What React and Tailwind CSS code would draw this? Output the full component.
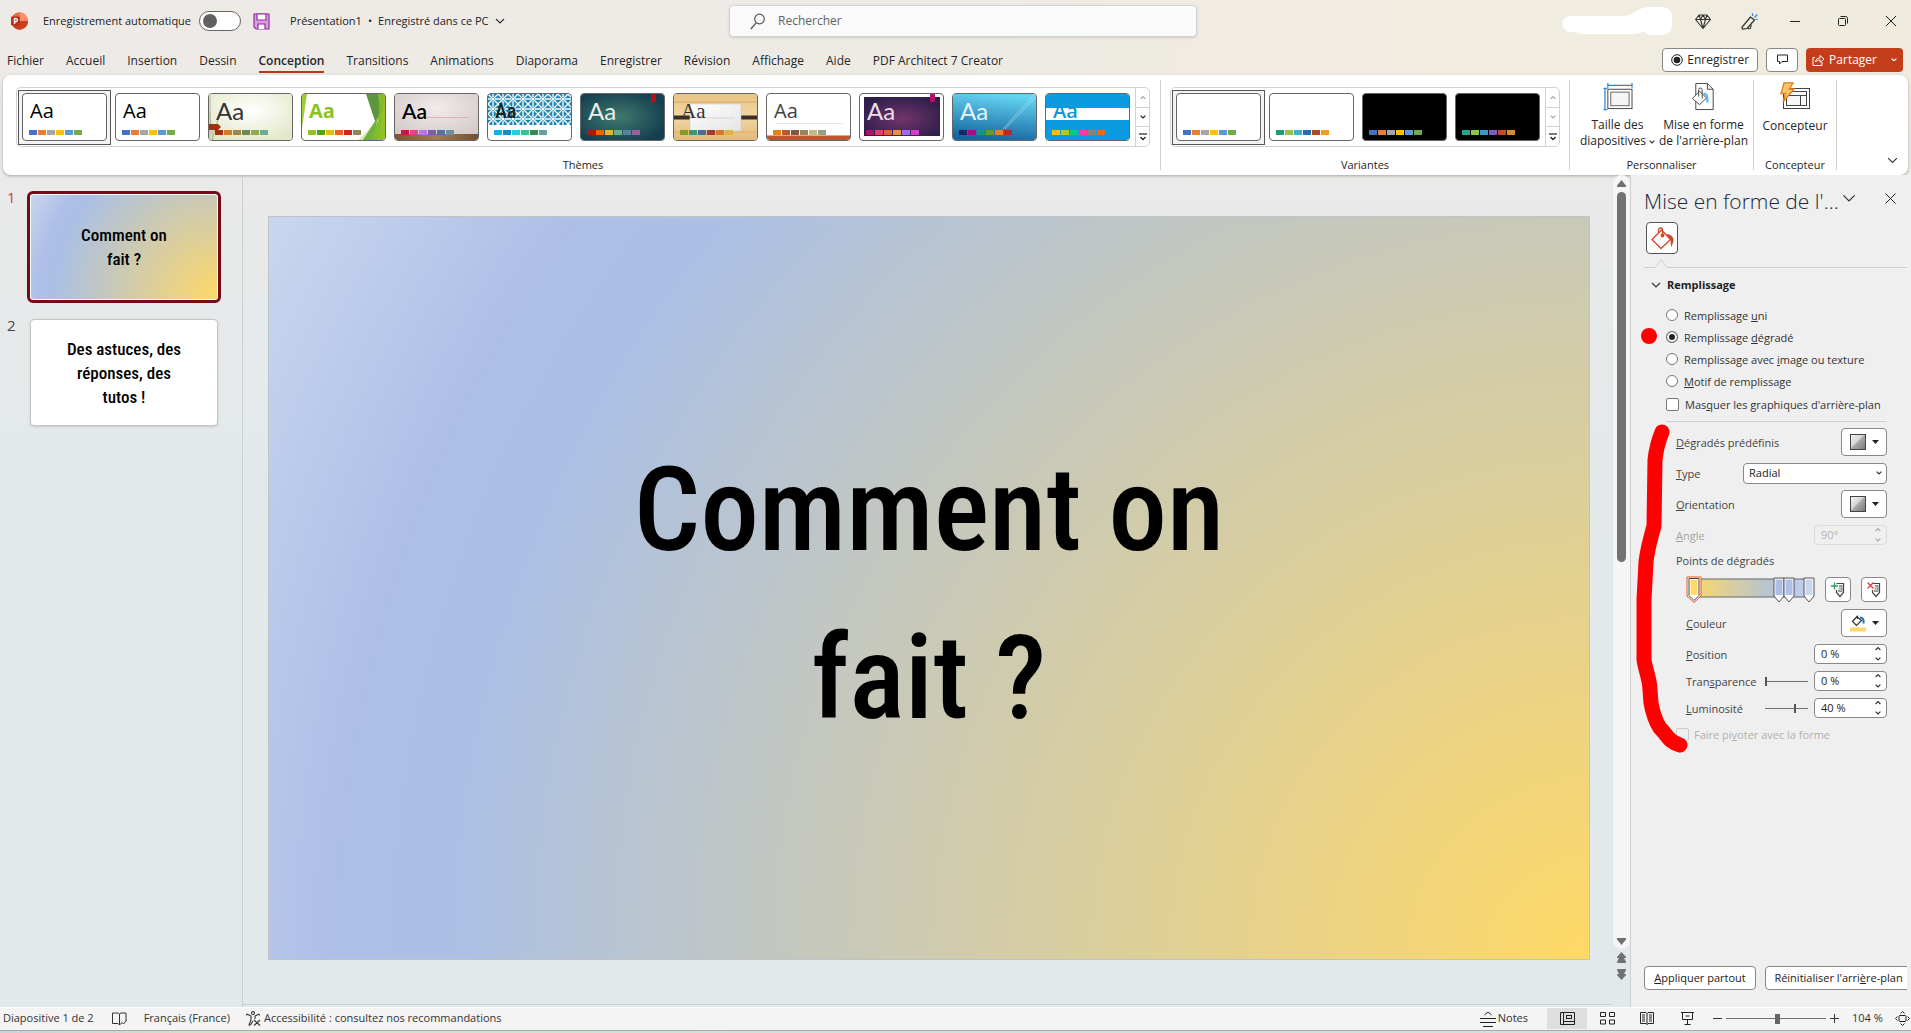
import React from 'react';

const OFFICE = ['#4472c4', '#ed7d31', '#a5a5a5', '#ffc000', '#5b9bd5', '#70ad47'];

const TABS = [
    'Fichier', 'Accueil', 'Insertion', 'Dessin', 'Conception', 'Transitions', 'Animations',
    'Diaporama', 'Enregistrer', 'Révision', 'Affichage', 'Aide', 'PDF Architect 7 Creator',
];

// Theme artworks, drawn on an 83x46 canvas
const Art = ({ children }) => (
    <svg className="absolute inset-0 h-full w-full" viewBox="0 0 83 46" preserveAspectRatio="none" aria-hidden="true">
        {children}
    </svg>
);

const THEMES = [
    { name: 'Thème Office actuel', colors: OFFICE, text: 'text-[20px] text-black', selected: true },
    { name: 'Thème Office', colors: OFFICE, text: 'text-[20px] text-black' },
    {
        name: 'Brin',
        colors: ['#a5300f', '#d97a1a', '#9f8351', '#728653', '#92aa4c', '#6aac91'],
        text: "text-[#333] text-[24px] font-['Lato',sans-serif]",
        art: (
            <Art>
                <defs><radialGradient id="brin" cx="50%" cy="35%" r="70%"><stop offset="0" stopColor="#fff" /><stop offset="1" stopColor="#e2e9c9" /></radialGradient></defs>
                <rect width="83" height="46" fill="url(#brin)" />
                <path d="M1 1v45M4 46C3 34 1 28 1 18M3 46C5 38 8 30 9 25" stroke="#b9b68d" strokeWidth="1" fill="none" />
                <path d="M0 30h9l3 3-3 3H0z" fill="#a5300f" />
            </Art>
        ),
    },
    {
        name: 'Facette',
        colors: ['#90c226', '#54a021', '#e6b91e', '#e76618', '#c42f1a', '#918655'],
        text: 'text-[20px] text-[#8cc321] font-bold',
        art: (
            <Art>
                <path d="M0 0h5L0 34z" fill="#9fcc3f" />
                <path d="M74 0h9v46H68l8-20z" fill="#90c226" />
                <path d="M64 0h12l3 14-5 16z" fill="#5f9440" />
                <path d="M74 28 56 46h12z" fill="#d8ebb0" />
                <path d="M75 24 61 46h11z" fill="#6fb03c" />
                <path d="M76 0h7L77 46h-9l9-22z" fill="#7fba2a" opacity=".7" />
            </Art>
        ),
    },
    {
        name: 'Galerie',
        colors: ['#b71e42', '#de478e', '#bc72f0', '#795faf', '#586ea6', '#6892a0'],
        text: "text-black text-[21px] font-semibold font-['Lato',sans-serif]",
        art: (
            <Art>
                <defs>
                    <radialGradient id="gal" cx="50%" cy="30%" r="75%"><stop offset="0" stopColor="#f1ebea" /><stop offset="1" stopColor="#d2c8c6" /></radialGradient>
                    <linearGradient id="wood"><stop offset="0" stopColor="#7a5634" /><stop offset=".5" stopColor="#a37c52" /><stop offset="1" stopColor="#72502f" /></linearGradient>
                </defs>
                <rect width="83" height="46" fill="url(#gal)" />
                <path d="M16 23.500h58" stroke="#e0b0bd" />
                <rect y="40" width="83" height="6" fill="url(#wood)" />
            </Art>
        ),
    },
    {
        name: 'Intégrale',
        colors: ['#1cade4', '#2683c6', '#27ced7', '#42ba97', '#3e8853', '#62a39f'],
        text: "text-[#12242c] text-[20px] font-medium font-['Roboto_Condensed','Liberation_Sans',sans-serif]",
        art: (
            <Art>
                <defs>
                    <pattern id="tri" width="10" height="10" patternUnits="userSpaceOnUse">
                        <rect width="10" height="10" fill="#1e86b4" />
                        <path d="M0 0l10 10M10 0L0 10M5 0v3M5 7v3M0 5h3M7 5h3" stroke="#fff" strokeWidth="1.300" />
                    </pattern>
                </defs>
                <rect width="83" height="31" fill="url(#tri)" />
            </Art>
        ),
    },
    {
        name: 'Ion',
        colors: ['#b01513', '#ea6312', '#e6b729', '#6aac90', '#54849a', '#9e5e9b'],
        text: "text-[#e8eeec] text-[24px] font-['Lato',sans-serif]",
        art: (
            <Art>
                <defs><radialGradient id="ion" cx="45%" cy="50%" r="60%"><stop offset="0" stopColor="#3f7b6d" /><stop offset="1" stopColor="#153f50" /></radialGradient></defs>
                <rect width="83" height="46" fill="url(#ion)" />
                <rect x="70" width="5" height="8" fill="#b01513" />
            </Art>
        ),
    },
    {
        name: 'Organique',
        colors: ['#83992a', '#3c9770', '#44709d', '#a23c33', '#d97828', '#deb340'],
        text: "text-[#333] text-[21px] font-['Liberation_Serif',serif]",
        art: (
            <Art>
                <defs>
                    <linearGradient id="org" x2="0" y2="1"><stop offset="0" stopColor="#e9c483" /><stop offset=".5" stopColor="#f1d7a4" /><stop offset="1" stopColor="#e3ba78" /></linearGradient>
                    <linearGradient id="pap" x2="1" y2="1"><stop offset="0" stopColor="#fff" /><stop offset="1" stopColor="#e4e4e4" /></linearGradient>
                </defs>
                <rect width="83" height="46" fill="url(#org)" />
                <path d="M0 8h83M0 38h83" stroke="#e4b878" strokeWidth="2" />
                <path d="M0 23.500h83" stroke="#3a2e26" strokeWidth="4" />
                <rect x="16" y="10" width="51" height="27" fill="url(#pap)" stroke="#cfc9bd" strokeWidth=".6" />
                <path d="M22 24h38" stroke="#d8d8c8" />
            </Art>
        ),
    },
    {
        name: 'Rétrospective',
        colors: ['#e48312', '#bd582c', '#865640', '#9b8357', '#c2bc80', '#94a088'],
        text: 'text-[20px] text-[#404040]',
        art: (
            <Art>
                <path d="M8 29.500h68" stroke="#e8e8e8" />
                <rect y="41" width="83" height="1" fill="#e9a77e" />
                <rect y="42" width="83" height="4" fill="#bd582c" />
            </Art>
        ),
    },
    {
        name: 'Salle d’ions',
        colors: ['#b31166', '#e33d6f', '#e45f3c', '#e9943a', '#9b6bf2', '#d53dd0'],
        text: "text-[#eadfea] text-[24px] font-['Lato',sans-serif]",
        art: (
            <Art>
                <defs><radialGradient id="sal" cx="50%" cy="55%" r="60%"><stop offset="0" stopColor="#73346b" /><stop offset="1" stopColor="#2e1f4a" /></radialGradient></defs>
                <rect x="4" y="3" width="76" height="39" fill="url(#sal)" />
                <rect x="70" width="5" height="8" fill="#b31166" />
            </Art>
        ),
    },
    {
        name: 'Tranche',
        colors: ['#052f61', '#a50e82', '#14967c', '#6a9e1f', '#e87d37', '#c62324'],
        text: "text-[#e6f6fb] text-[24px] font-['Lato',sans-serif]",
        art: (
            <Art>
                <defs><linearGradient id="tra" x1=".6" x2=".4" y2="1"><stop offset="0" stopColor="#65d6f3" /><stop offset="1" stopColor="#15659f" /></linearGradient></defs>
                <rect width="83" height="46" fill="url(#tra)" />
                <path d="M82 0 50 35M83 3 52 35" stroke="#c4ecf8" strokeWidth=".7" opacity=".8" />
            </Art>
        ),
    },
    {
        name: 'À bandes',
        colors: ['#ffc000', '#a5d028', '#08cc78', '#f24099', '#828288', '#f56617'],
        text: 'text-[20px] font-semibold text-[#0f97d6]',
        art: (
            <Art>
                <rect width="83" height="14" fill="#0c9ae0" />
                <rect y="26" width="83" height="20" fill="#0c9ae0" />
            </Art>
        ),
    },
];

const VARIANTS = [
    { name: 'Variante 1', colors: OFFICE, selected: true },
    { name: 'Variante 2', colors: ['#1b9e77', '#93c347', '#39afd1', '#1f6fb2', '#b5481c', '#f39b1c'] },
    { name: 'Variante 3', colors: OFFICE, dark: true },
    { name: 'Variante 4', colors: ['#27a588', '#93c347', '#3d97c9', '#7d5cc2', '#c8472c', '#d98c2b'], dark: true },
];

const Chevron = ({ className = '', up = false, size = 8, color = '#333' }) => (
    <svg className={className} width={size} height={size * 0.6} viewBox="0 0 10 6" fill="none" stroke={color} strokeWidth={size < 8 ? 2 : 12 / size} aria-hidden="true">
        <path d={up ? 'M1 5l4-4 4 4' : 'M1 1l4 4 4-4'} />
    </svg>
);

const ThemeThumb = ({ theme }) => (
    <button
        type="button"
        aria-label={theme.name}
        className={`flex h-[55px] w-[93px] items-center justify-center ${theme.selected ? 'border border-[#555] bg-[#f3f3f3]' : ''}`}
    >
        <span className={`relative block h-12 w-[85px] overflow-hidden rounded-[4px] border border-[#666] ${theme.dark ? 'bg-black' : 'bg-white'}`}>
            {theme.art}
            {theme.text && <span className={`absolute left-[7px] top-[5px] leading-[24px] ${theme.text}`}>Aa</span>}
            <span className="absolute bottom-[5px] left-[6px] flex gap-px">
                {theme.colors.map((c, i) => <span key={i} className="h-[5px] w-[8px]" style={{ backgroundColor: c }}></span>)}
            </span>
        </span>
    </button>
);

const Gallery = ({ items, downActive, label }) => (
    <div className="flex h-[60px] rounded-[5px] border border-[#d2d2d2]" role="group" aria-label={label}>
        <div className="flex items-center px-px">
            {items.map((t) => <ThemeThumb key={t.name} theme={t} />)}
        </div>
        <div className="flex w-[14px] flex-col divide-y divide-[#d2d2d2] border-l border-[#d2d2d2]">
            <button type="button" aria-label="Ligne précédente" className="flex flex-1 items-center justify-center"><Chevron up size={6} color="#aaa" /></button>
            <button type="button" aria-label="Ligne suivante" className="flex flex-1 items-center justify-center"><Chevron size={6} color={downActive ? '#222' : '#aaa'} /></button>
            <button type="button" aria-label="Autres" className="flex flex-1 items-center justify-center">
                <svg width="8" height="8" viewBox="0 0 8 8" stroke="#222" fill="none"><path d="M0 1h8" strokeWidth="1.200" /><path d="M1.500 4 4 6.500 6.500 4" strokeWidth="1.300" /></svg>
            </button>
        </div>
    </div>
);

const TitleBar = () => (
    <header className="flex h-[42px] items-center text-[12px] text-[#222]">
        <div className="flex w-[729px] items-center pl-[10px] text-[11px]">
            <svg width="18" height="18" viewBox="0 0 18 18" className="mr-[15px]" role="img" aria-label="PowerPoint">
                <circle cx="9.500" cy="9" r="8.500" fill="#d35230" />
                <path d="M9.500.5A8.500 8.500 0 0 1 18 9H9.500z" fill="#ff8f6b" />
                <path d="M18 9A8.500 8.500 0 0 1 3 14.500L9.500 9z" fill="#c9401e" />
                <path d="M9.500.5A8.500 8.500 0 0 0 1 9h8.500z" fill="#ed6c47" />
                <rect x="1" y="4.500" width="9" height="9" rx="1" fill="#b7321a" />
                <text x="3.200" y="12" fontSize="8" fontWeight="bold" fill="#fff">P</text>
            </svg>
            <span id="autosave">Enregistrement automatique</span>
            <button type="button" role="switch" aria-checked="false" aria-labelledby="autosave" className="ml-2 flex h-5 w-[42px] items-center rounded-full border border-[#666] bg-white px-[3px]">
                <span className="h-[14px] w-[14px] rounded-full bg-[#616161]"></span>
            </button>
            <button type="button" aria-label="Enregistrer le fichier" className="ml-3 mr-5">
                <svg width="17" height="17" viewBox="0 0 17 17" fill="#dc9be2" stroke="#8d2f9b" strokeWidth="1.200">
                    <path d="M1 1h15v15H3l-2-2z" /><path d="M4 1h9v6H4z" fill="#fff" /><path d="M5 16v-5h7v5" fill="#fff" />
                </svg>
            </button>
            <span className="flex items-center gap-[6px] whitespace-nowrap">
                <span>Présentation1</span><span>•</span><span>Enregistré dans ce PC</span><Chevron size={10} />
            </span>
        </div>
        <label className="flex h-8 w-[468px] items-center rounded-[4px] border border-[#d3d3d3] bg-[#fafafa] pl-5 shadow-sm">
            <svg width="15" height="17" viewBox="0 0 15 17" fill="none" stroke="#555" strokeWidth="1.200" aria-hidden="true"><circle cx="9.500" cy="6" r="4.800" /><path d="M6 10 .8 16" /></svg>
            <input type="search" aria-label="Rechercher" placeholder="Rechercher" className="ml-[13px] flex-1 bg-transparent text-[12px] outline-none placeholder:text-[#616161]" />
        </label>
        <div className="ml-auto flex items-center">
            <svg width="110" height="29" viewBox="0 0 110 29" className="mr-[23px]" aria-hidden="true">
                <path d="M8 9h52C72 9 74 1 86 0h14c6 0 10 4 10 9v8c0 7-4 11-10 11h-10c-5 0-7-2-8-4-2 2-6 3-10 3H20c-3 0-5-2-7-2H8C-2 23-2 10 8 9z" fill="#fff" />
            </svg>
            <button type="button" aria-label="Premium" className="flex w-[16px] justify-center">
                <svg width="16" height="15" viewBox="0 0 16 15" fill="none" stroke="#333" strokeWidth="1.100" strokeLinejoin="round"><path d="M4 1h8l3.500 4.500L8 14.500.5 5.500zM.5 5.500h15M4 1l1.500 4.500L8 14.500l2.500-9L12 1M5.500 5.500 8 1l2.500 4.500" /></svg>
            </button>
            <button type="button" aria-label="Nouveautés" className="ml-[30px]">
                <svg width="17" height="17" viewBox="0 0 17 17" fill="none" stroke="#333" strokeWidth="1.200" strokeLinejoin="round"><path d="M9.500 4 13.500 7 6 15.500 1.500 16.200.8 14.500z" /><path d="M6.500 15c2 1.500 4 .8 3.500-3.500" /><path d="M11.500 3V.3M13.500 4.500l2.800-3M14.500 6.500h2.300" stroke="#2b88d8" /></svg>
            </button>
            <button type="button" aria-label="Réduire" className="ml-[31px]"><svg width="12" height="12" viewBox="0 0 12 12" stroke="#222"><path d="M1 6.500h10" /></svg></button>
            <button type="button" aria-label="Niveau inférieur" className="ml-9"><svg width="12" height="12" viewBox="0 0 12 12" fill="none" stroke="#222"><rect x="1.500" y="3.500" width="7" height="7" rx="1" /><path d="M3.500 1.500h5a2 2 0 0 1 2 2v5" /></svg></button>
            <button type="button" aria-label="Fermer" className="ml-9 mr-[14px]"><svg width="12" height="12" viewBox="0 0 12 12" stroke="#222"><path d="M1 1l10 10M11 1L1 11" /></svg></button>
        </div>
    </header>
);

const TabBar = () => (
    <div className="flex h-[33px] items-center pl-[7px] pr-2 pt-[2px] text-[#262626]">
        <nav className="flex items-center gap-[22px] text-[12px]">
            {TABS.map((tab) => (
                <a key={tab} href="#" className={`whitespace-nowrap border-b-2 pb-px pt-[5px] ${tab === 'Conception' ? 'border-[#b7361a] font-semibold' : 'border-transparent'}`}>
                    {tab}
                </a>
            ))}
        </nav>
        <div className="ml-auto flex h-6 gap-2 text-[12px]">
            <button type="button" className="flex items-center gap-1 rounded-[4px] border border-[#888] bg-white px-[8px]">
                <svg width="12" height="12" viewBox="0 0 12 12" aria-hidden="true"><circle cx="6" cy="6" r="5.300" fill="none" stroke="#222" /><circle cx="6" cy="6" r="3.300" fill="#222" /></svg>
                Enregistrer
            </button>
            <button type="button" aria-label="Commentaires" className="flex w-8 items-center justify-center rounded-[4px] border border-[#888] bg-white">
                <svg width="11" height="11" viewBox="0 0 11 11" fill="none" stroke="#222"><path d="M.5 1h10v6.500H5L2.500 10V7.500h-2z" /></svg>
            </button>
            <button type="button" className="flex items-center gap-1 rounded-[4px] bg-[#c43e1c] px-[6px] text-white">
                <svg width="13" height="12" viewBox="0 0 13 12" fill="none" stroke="#fff" aria-hidden="true"><path d="M3 3.500H1v8h9V8" /><path d="M3.500 8c.3-2.500 1.800-4 4.500-4V1.500L12 5 8 8.300V6C6 6 4.500 6.500 3.500 8z" /></svg>
                Partager
                <Chevron size={6} color="#fff" className="ml-[10px]" />
            </button>
        </div>
    </div>
);

const BigButton = ({ icon, lines, className = '' }) => (
    <button type="button" className={`flex h-[67px] flex-col items-center gap-[6px] text-center text-[12px] leading-4 ${className}`}>
        {icon}
        <span className="whitespace-nowrap">{lines}</span>
    </button>
);

const GroupLabel = ({ children }) => <div className="mt-auto text-center text-[11px] leading-[10px]">{children}</div>;

const Ribbon = () => (
    <section className="mx-[3px] flex h-[100px] rounded-[8px] bg-white py-[5px] text-[#262626] shadow-[0_1px_3px_rgba(0,0,0,0.3)]">
        <div className="flex flex-col border-r border-[#d0d0d0] pl-[13px] pr-[10px] pt-[7px]">
            <Gallery items={THEMES} downActive label="Thèmes" />
            <GroupLabel>Thèmes</GroupLabel>
        </div>
        <div className="flex flex-col border-r border-[#d0d0d0] px-[9px] pt-[7px]">
            <Gallery items={VARIANTS} label="Variantes" />
            <GroupLabel>Variantes</GroupLabel>
        </div>
        <div className="flex w-[184px] flex-col border-r border-[#d0d0d0]">
            <div className="flex justify-center gap-1 pt-[2px]">
                <BigButton
                    className="w-[80px]"
                    icon={
                        <svg width="30" height="30" viewBox="0 0 30 30" fill="none" aria-hidden="true">
                            <path d="M4.500 3.500h25M4.500 1v5M29.500 1v5M1.500 6v22M0 6.500h4M0 28.500h4" stroke="#2b88d8" strokeWidth="1.300" />
                            <rect x="4.500" y="7.500" width="25" height="20" stroke="#444" /><rect x="7.500" y="10.500" width="19" height="14" fill="#f5f5f5" stroke="#666" />
                        </svg>
                    }
                    lines={<>Taille des<br />diapositives <Chevron size={6} className="inline" /></>}
                />
                <BigButton
                    className="w-[84px]"
                    icon={
                        <svg width="28" height="30" viewBox="0 0 28 30" fill="none" stroke="#444" aria-hidden="true">
                            <path d="M5.500 1.500h12l6 6v21h-18z" fill="#fff" /><path d="M17.500 1.500v6h6" />
                            <path d="M2 17 9.500 9.500l7 7-7 7z" fill="#fff" /><path d="M8.500 15V8a1.800 1.800 0 0 1 3.600 0v9" />
                            <path d="M13.500 12c4 0 4 4 4 9" stroke="#6cb5ee" strokeWidth="2.500" />
                        </svg>
                    }
                    lines={<>Mise en forme<br />de l'arrière-plan</>}
                />
            </div>
            <GroupLabel>Personnaliser</GroupLabel>
        </div>
        <div className="flex w-[83px] flex-col border-r border-[#d0d0d0]">
            <div className="flex justify-center pt-[2px]">
                <BigButton
                    icon={
                        <svg width="32" height="30" viewBox="0 0 32 30" fill="none" stroke="#444" aria-hidden="true">
                            <rect x="4.500" y="6.500" width="26" height="20" fill="#fff" /><rect x="7.500" y="9.500" width="20" height="14" fill="#f7f7f7" /><path d="M7 13.500h21M21.500 13.500v10" />
                            <path d="M5 .8h9L10.500 7H15L4 20l2.500-8.500H2z" fill="#f9c76b" stroke="#e07b1a" strokeWidth="1.300" />
                        </svg>
                    }
                    lines="Concepteur"
                />
            </div>
            <GroupLabel>Concepteur</GroupLabel>
        </div>
        <button type="button" aria-label="Réduire le ruban" className="ml-auto mr-[10px] mt-auto mb-[6px]"><Chevron size={11} /></button>
    </section>
);

const SLIDE_BG = 'bg-[radial-gradient(circle_farthest-corner_at_100%_100%,#ffd966_0%,#abc0e4_75%,#adbfe7_83%,#c9d7ee_100%)]';
const HAND_FONT = "font-['Roboto_Condensed','Liberation_Sans_Narrow','DejaVu_Sans_Condensed',sans-serif] font-medium";

const SlideList = () => (
    <aside className="flex w-[243px] flex-col gap-[16px] border-r border-[#cdd0d1] pl-[7px] pt-4 text-[15px] leading-3" aria-label="Diapositives">
        <div className="flex items-start">
            <span className="w-[20px] text-[#d04423]">1</span>
            <button type="button" className={`flex h-[112px] w-[194px] items-center justify-center rounded-[6px] border-[3px] border-[#750b17] text-[17px] leading-6 text-black ring-1 ring-inset ring-white ${SLIDE_BG} ${HAND_FONT}`}>
                <span>Comment on<br />fait ?</span>
            </button>
        </div>
        <div className="flex items-start">
            <span className="w-[23px] text-[#444]">2</span>
            <button type="button" className={`flex h-[107px] w-[188px] items-center justify-center rounded-[4px] border border-[#c4c4c4] bg-white text-[17px] leading-6 text-black shadow-sm ${HAND_FONT}`}>
                <span>Des astuces, des<br />réponses, des<br />tutos !</span>
            </button>
        </div>
    </aside>
);

const Canvas = () => (
    <main className="flex flex-1 flex-col">
        <div className="flex-1 pb-[41px] pl-[25px] pr-[23px] pt-[41px]">
            <div className={`flex aspect-video w-full items-center justify-center border border-[#c0c3c6] ${SLIDE_BG}`}>
                <h1 className={`pt-[12px] text-center text-[117px] leading-[168px] text-black ${HAND_FONT}`}>Comment on<br />fait ?</h1>
            </div>
        </div>
        <div className="mb-[2px] border-b border-[#cfcfcf]"></div>
    </main>
);

const ScrollRail = () => (
    <div className="flex w-[17px] flex-col items-center">
        <div className="flex w-full flex-1 flex-col items-center rounded-full bg-[#f5f5f5] pb-1 pt-[5px]">
            <svg width="9" height="7" viewBox="0 0 9 7" fill="#707070" aria-hidden="true"><path d="M4.500 0 9 5.500V7H0V5.500z" /></svg>
            <div className="mt-[5px] h-[370px] w-[9px] rounded-full bg-[#727272]"></div>
            <svg className="mt-auto" width="9" height="7" viewBox="0 0 9 7" fill="#707070" aria-hidden="true"><path d="M4.500 7 9 1.500V0H0v1.500z" /></svg>
        </div>
        <button type="button" aria-label="Diapositive précédente" className="mt-[3px]"><svg width="9" height="11" viewBox="0 0 9 11" fill="#707070"><path d="M4.500 0 9 5v1H7l2 4v1H0v-1l2-4H0V5z" /></svg></button>
        <button type="button" aria-label="Diapositive suivante" className="mb-[27px] mt-[6px]"><svg width="9" height="11" viewBox="0 0 9 11" fill="#707070"><path d="M4.500 11 9 6V5H7l2-4V0H0v1l2 4H0v1z" /></svg></button>
    </div>
);

const FILLS = [
    { id: 'uni', label: <>Remplissage <u>u</u>ni</> },
    { id: 'degrade', label: <>Remplissage <u>d</u>égradé</> },
    { id: 'image', label: <>Remplissage avec <u>i</u>mage ou texture</> },
    { id: 'motif', label: <><u>M</u>otif de remplissage</> },
];

const Spin = ({ id, value, disabled }) => (
    <span className={`flex h-5 w-[73px] items-center rounded-[4px] border pl-[6px] pr-[5px] ${disabled ? 'border-[#dcdcdc]' : 'border-[#888] bg-white'}`}>
        <input id={id} type="text" defaultValue={value} disabled={disabled} className="w-0 flex-1 bg-transparent text-[11px] leading-4 text-[#222] outline-none disabled:text-[#b5b5b5]" />
        <span className="flex flex-col gap-[6px]">
            <Chevron up size={6} color={disabled ? '#aaa' : '#333'} />
            <Chevron size={6} color={disabled ? '#aaa' : '#333'} />
        </span>
    </span>
);

const DropButton = ({ label, children }) => (
    <button type="button" aria-label={label} className="flex h-7 w-[46px] items-center justify-center gap-[6px] rounded-[4px] border border-[#888] bg-white">
        {children}
        <svg width="7" height="4" viewBox="0 0 7 4" fill="#222" aria-hidden="true"><path d="M0 0h7L3.500 4z" /></svg>
    </button>
);

const GradientSwatch = () => <span className="h-4 w-4 border border-[#444] bg-[linear-gradient(135deg,#f2f2f2_0%,#d5d5d5_45%,#ababab_50%,#7a7a7a_100%)]"></span>;

const RANGE = 'h-px w-[43px] appearance-none bg-[#707070] [&::-webkit-slider-thumb]:h-[9px] [&::-webkit-slider-thumb]:w-[2px] [&::-webkit-slider-thumb]:appearance-none [&::-webkit-slider-thumb]:bg-[#555]';
const STOPS = [
    { x: 88, color: '#adc0e3' },
    { x: 98, color: '#adc0e7' },
    { x: 118, color: '#c9d7ee' },
];

const FormatPane = () => (
    <aside className="relative flex w-[281px] flex-col border-l border-[#cfcfcf] bg-[#efefef] pl-[13px] pr-1 text-[12px] text-[#333]" aria-label="Mise en forme de l'arrière-plan">
        <div className="flex h-[47px] items-center">
            <h2 className="whitespace-nowrap pt-[6px] text-[21px] font-light text-[#22273a]">Mise en forme de l'...</h2>
            <button type="button" aria-label="Options du volet" className="ml-auto"><Chevron size={14} /></button>
            <button type="button" aria-label="Fermer le volet" className="ml-[29px] mr-[11px]"><svg width="11" height="11" viewBox="0 0 11 11" stroke="#222"><path d="M.5.5l10 10M10.500.5l-10 10" /></svg></button>
        </div>
        <button type="button" aria-label="Remplissage de forme" className="ml-[2px] flex h-8 w-8 items-center justify-center rounded-[4px] border border-[#555] bg-white">
            <svg width="23" height="23" viewBox="0 0 23 23" fill="none" stroke="#d24726" strokeWidth="1.300"><path d="M10.500 3 1 12.500l9 9 9.500-9z" /><path d="M7.500 6V3a2 2 0 0 1 4 0v5" /><circle cx="11.500" cy="8.500" r="1.300" fill="#d24726" /><path d="M15 7c6 0 8 4 7.500 7-.3 2-1.500 3-1.500 6-2-3-1-5-1.500-7.500z" fill="#d24726" stroke="none" /></svg>
        </button>
        <svg className="w-full" height="15" viewBox="0 0 263 15" fill="none" stroke="#cfcfcf" aria-hidden="true"><path d="M0 13.500h11l6-8 6 8h240" /></svg>
        <h3 className="flex h-8 items-center gap-[6px] pl-[7px] text-[11px] font-bold text-[#222]"><Chevron size={10} />Remplissage</h3>
        <fieldset className="mt-[3px] pl-[22px] text-[11px]">
            {FILLS.map((f) => (
                <div key={f.id} className="flex h-[22px] items-center gap-[6px]">
                    <input id={f.id} type="radio" name="fill" defaultChecked={f.id === 'degrade'} className="h-3 w-3 appearance-none rounded-full border border-[#777] bg-white checked:bg-[#222] checked:shadow-[inset_0_0_0_2px_#fff]" />
                    <label htmlFor={f.id} className="pt-[2px]">{f.label}</label>
                </div>
            ))}
            <div className="flex h-6 items-center gap-[6px]">
                <input id="masquer" type="checkbox" className="h-[13px] w-[13px] appearance-none rounded-[2px] border border-[#777] bg-white" />
                <label htmlFor="masquer" className="whitespace-nowrap pt-[2px]">Mas<u>q</u>uer les graphiques d'arrière-plan</label>
            </div>
        </fieldset>
        <div className="ml-[22px] mr-5 mt-[5px] flex flex-col gap-[7px] border-t border-[#d0d0d0] pl-[10px] pt-[6px] text-[11px] leading-4 text-[#444]">
            <div className="flex items-center justify-between">
                <span className="pt-[2px]"><u>D</u>égradés prédéfinis</span>
                <DropButton label="Dégradés prédéfinis"><GradientSwatch /></DropButton>
            </div>
            <div className="flex h-5 items-center justify-between">
                <label htmlFor="type" className="pt-[2px]"><u>T</u>ype</label>
                <span className="relative flex items-center">
                    <select id="type" className="h-[21px] w-[144px] appearance-none rounded-[4px] border border-[#888] bg-white pl-[5px] text-[11px] leading-4 text-[#222]">
                        <option>Radial</option>
                    </select>
                    <Chevron size={6} className="pointer-events-none absolute right-[5px]" />
                </span>
            </div>
            <div className="flex items-center justify-between">
                <span className="pt-[2px]"><u>O</u>rientation</span>
                <DropButton label="Orientation"><GradientSwatch /></DropButton>
            </div>
            <div className="flex items-center justify-between text-[#a3a3a3]">
                <label htmlFor="angle" className="pt-[2px]"><u>A</u>ngle</label>
                <Spin id="angle" value="90°" disabled />
            </div>
            <div className="h-[18px] pt-px">Points de dégradés</div>
            <div className="flex h-[25px] items-center justify-end gap-[10px]">
                <svg width="129" height="28" viewBox="0 0 129 28" className="shrink-0" role="img" aria-label="Points de dégradés">
                    <defs><linearGradient id="bar"><stop offset="0" stopColor="#ffd966" /><stop offset=".75" stopColor="#adc0e3" /><stop offset="1" stopColor="#c9d7ee" /></linearGradient></defs>
                    <rect x="2" y="3" width="125" height="18" fill="url(#bar)" stroke="#666" />
                    {STOPS.map((s) => (
                        <g key={s.x}>
                            <path d={`M${s.x} 2h10v18l-5 6-5-6z`} fill="#fff" stroke="#555" />
                            <rect x={s.x + 1.5} y="3.500" width="7" height="15.500" fill={s.color} />
                        </g>
                    ))}
                    <path d="M1 1h14v19l-7 6.500L1 20z" fill="#fff" stroke="#e8541b" />
                    <path d="M3 2.500h10v17l-5 5-5-5z" fill="#fff" stroke="#444" />
                    <rect x="4.500" y="4" width="7" height="15" fill="#ffd966" />
                </svg>
                <button type="button" aria-label="Ajouter un point de dégradé" className="flex h-[25px] w-[26px] shrink-0 items-center justify-center rounded-[4px] border border-[#888] bg-white">
                    <svg width="15" height="17" viewBox="0 0 15 17" fill="none"><path d="M5.500 2.500h7v9l-3.500 4-3.500-4V9" stroke="#444" strokeWidth="1.200" /><path d="M8 4.500h3v6H7.500V9" fill="#bbb" stroke="#888" /><path d="M3.500 1.500v7M0 5h7" stroke="#2e9e57" strokeWidth="1.300" /></svg>
                </button>
                <button type="button" aria-label="Supprimer un point de dégradé" className="flex h-[25px] w-[26px] shrink-0 items-center justify-center rounded-[4px] border border-[#888] bg-white">
                    <svg width="15" height="17" viewBox="0 0 15 17" fill="none"><path d="M5.500 2.500h7v9l-3.500 4-3.500-4V9" stroke="#444" strokeWidth="1.200" /><path d="M8 4.500h3v6H7.500V9" fill="#bbb" stroke="#888" /><path d="M.5 1.500l6 6M6.500 1.500l-6 6" stroke="#e03c3c" strokeWidth="1.300" /></svg>
                </button>
            </div>
            <div className="flex items-center justify-between pl-[10px]">
                <span className="pt-[2px]"><u>C</u>ouleur</span>
                <DropButton label="Couleur">
                    <svg width="16" height="18" viewBox="0 0 16 18" fill="none" aria-hidden="true"><path d="M7 2.500 2.500 7.500l4 4 5-5zM7.500 5V1.500" stroke="#333" strokeWidth="1.200" /><path d="M10 3.500c3 0 4 2 3.500 6" stroke="#1f6fb2" strokeWidth="2" /><rect y="13.500" width="16" height="4" fill="#ffd966" /></svg>
                </DropButton>
            </div>
            <div className="flex items-center justify-between pl-[10px]">
                <label htmlFor="position" className="pt-[2px]"><u>P</u>osition</label>
                <Spin id="position" value="0 %" />
            </div>
            <div className="flex items-center pl-[10px]">
                <label htmlFor="transparence" className="pt-[2px]">Tran<u>s</u>parence</label>
                <input type="range" aria-label="Transparence" min="0" max="100" defaultValue="0" className={`ml-auto mr-[6px] ${RANGE}`} />
                <Spin id="transparence" value="0 %" />
            </div>
            <div className="flex items-center pl-[10px]">
                <label htmlFor="luminosite" className="pt-[2px]"><u>L</u>uminosité</label>
                <input type="range" aria-label="Luminosité" min="-100" max="100" defaultValue="40" className={`ml-auto mr-[6px] ${RANGE}`} />
                <Spin id="luminosite" value="40 %" />
            </div>
            <div className="flex items-center gap-[5px] text-[#b0b0b0]">
                <input id="pivoter" type="checkbox" disabled className="h-[13px] w-[13px] appearance-none rounded-[2px] border border-[#ccc]" />
                <label htmlFor="pivoter" className="pt-[2px]">Faire pi<u>v</u>oter avec la forme</label>
            </div>
        </div>
        <div className="mb-[17px] mt-auto flex gap-[9px] overflow-hidden text-[11px] text-[#222]">
            <button type="button" className="h-6 w-[112px] shrink-0 whitespace-nowrap rounded-[4px] border border-[#888] bg-white"><u>A</u>ppliquer partout</button>
            <button type="button" className="h-6 w-[147px] shrink-0 whitespace-nowrap rounded-[4px] border border-[#888] bg-white">Réinitialiser l'arri<u>è</u>re-plan</button>
        </div>
        {/* red pen marks drawn over the pane */}
        <svg className="pointer-events-none absolute left-0 top-0" width="70" height="600" viewBox="1631 175 70 600" aria-hidden="true">
            <circle cx="1649" cy="336" r="8" fill="#f00" />
            <path d="M1662 432C1658 442 1656 450 1655 460L1654 526C1650 540 1647 552 1646 562L1644 600V660C1646 672 1650 680 1650 690L1651 703C1653 714 1656 722 1660 728 1666 733 1668 742 1680 745" fill="none" stroke="#f00" strokeWidth="15" strokeLinecap="round" strokeLinejoin="round" />
        </svg>
    </aside>
);

const StatusBar = () => (
    <footer className="flex h-[23px] items-center border-t border-white bg-[#f4f4f4] pb-px text-[11px] text-[#333]">
        <span className="pl-[3px]">Diapositive 1 de 2</span>
        <button type="button" aria-label="Vérification" className="ml-[18px]"><svg width="15" height="14" viewBox="0 0 15 14" fill="none" stroke="#333"><path d="M7.500 2v11L6 11.500H.5V1H6L7.500 2 9 1h5v8M7.500 13l2-2M9.500 10l2 2 3-3.500" /></svg></button>
        <button type="button" className="ml-[17px]">Français (France)</button>
        <button type="button" className="ml-4 flex items-center gap-[3px]">
            <svg width="15" height="15" viewBox="0 0 15 15" fill="none" stroke="#333" strokeWidth="1.100" aria-hidden="true"><circle cx="7" cy="2" r="1.500" /><path d="M1 3l4 2v4l-2 5h1.500L7 10M13 3 9 5v3M1 3l-.5 1.500M13 3l.5 1.500M8 9l6 5.500M14 9l-6 5.500" /></svg>
            Accessibilité : consultez nos recommandations
        </button>
        <div className="ml-auto flex h-full items-center">
            <button type="button" className="mr-[19px] flex items-center gap-[2px]">
                <svg width="16" height="16" viewBox="0 0 16 16" fill="none" stroke="#222" aria-hidden="true"><path d="M4.500 4 8 1l3.500 3M0 7.500h16M0 11.500h16M3 15.500h10" /></svg>
                Notes
            </button>
            <button type="button" aria-label="Normal" className="flex h-full w-10 items-center justify-center bg-[#dedede]"><svg width="15" height="13" viewBox="0 0 15 13" fill="none" stroke="#222"><path d="M.5.5h14v12H.5zM3.500.5v12M3.500 9.500h11" /><rect x="6.500" y="3.500" width="5" height="3" /></svg></button>
            <button type="button" aria-label="Trieuse de diapositives" className="flex w-10 justify-center"><svg width="15" height="13" viewBox="0 0 15 13" fill="none" stroke="#222"><path d="M.5.5h5v4h-5zM9.500.5h5v4h-5zM.5 8h5v4h-5zM9.500 8h5v4h-5z" /></svg></button>
            <button type="button" aria-label="Mode Lecture" className="flex w-10 justify-center"><svg width="14" height="13" viewBox="0 0 14 13" fill="none" stroke="#222"><path d="M7 1.500v11L6 11.500H.5V.5H6zM7 1.500 8 .5h5.500v11H8l-1 1M2 3h3M2 5h3M2 7h3M2 9h3M9 3h3M9 5h3M9 7h3M9 9h3" /></svg></button>
            <button type="button" aria-label="Diaporama" className="flex w-10 justify-center"><svg width="13" height="13" viewBox="0 0 13 13" fill="none" stroke="#222"><path d="M0 .5h13M1.500.5v7h10v-7M6.500 7.500v5M3.500 12.500h6M4.500 4h4" /></svg></button>
            <button type="button" aria-label="Zoom arrière" className="ml-[6px]"><svg width="9" height="9" viewBox="0 0 9 9" stroke="#333"><path d="M0 4.500h9" /></svg></button>
            <input type="range" aria-label="Zoom" min="0" max="100" defaultValue="52" className="mx-1 h-px w-[100px] appearance-none bg-[#707070] [&::-webkit-slider-thumb]:h-[10px] [&::-webkit-slider-thumb]:w-[5px] [&::-webkit-slider-thumb]:appearance-none [&::-webkit-slider-thumb]:bg-[#666]" />
            <button type="button" aria-label="Zoom avant"><svg width="9" height="9" viewBox="0 0 9 9" stroke="#333"><path d="M0 4.500h9M4.500 0v9" /></svg></button>
            <span className="ml-[13px] w-[43px]">104 %</span>
            <button type="button" aria-label="Ajuster à la fenêtre" className="mr-px"><svg width="15" height="15" viewBox="0 0 15 15" fill="none" stroke="#222"><rect x="4" y="4.500" width="7" height="6" rx="1" /><path d="M5.500 2.500l2-2 2 2M5.500 12.500l2 2 2-2M2.500 5.500l-2 2 2 2M12.500 5.500l2 2-2 2" /></svg></button>
        </div>
    </footer>
);

const App = () => (
    <div className="flex min-h-screen flex-col bg-[linear-gradient(to_bottom,transparent_0px,transparent_80px,#e9eae9_190px,#e3e9eb_480px,#e2e9eb_100%),linear-gradient(to_right,#edeae7_0%,#eeebe5_50%,#f1ece0_75%,#efecdf_100%)] font-['Open_Sans','Noto_Sans',sans-serif]">
        <TitleBar />
        <TabBar />
        <Ribbon />
        <div className="flex flex-1">
            <SlideList />
            <Canvas />
            <ScrollRail />
            <FormatPane />
        </div>
        <StatusBar />
        <div className="h-[3px] border-t border-[#a5a9a9] bg-[linear-gradient(to_right,#c8d4da,#d5e0c8_12%,#cfe0dc_40%,#cfe0dc)]"></div>
    </div>
);

export default App;
